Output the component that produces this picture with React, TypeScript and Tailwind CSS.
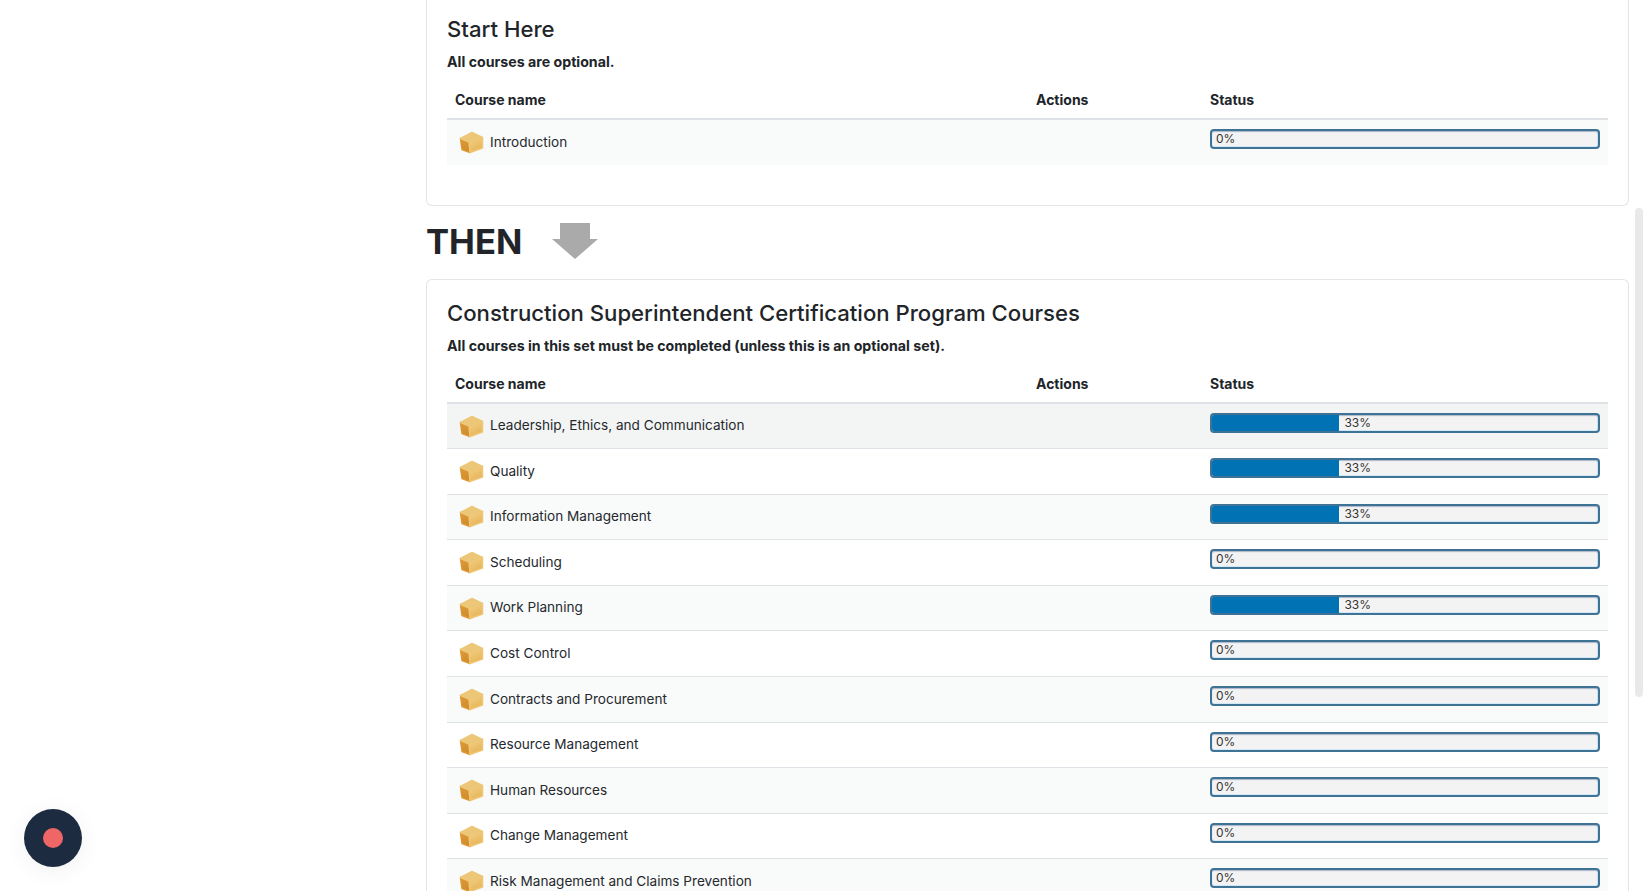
const courses = [
  { name: "Leadership, Ethics, and Communication", pct: 33 },
  { name: "Quality", pct: 33 },
  { name: "Information Management", pct: 33 },
  { name: "Scheduling", pct: 0 },
  { name: "Work Planning", pct: 33 },
  { name: "Cost Control", pct: 0 },
  { name: "Contracts and Procurement", pct: 0 },
  { name: "Resource Management", pct: 0 },
  { name: "Human Resources", pct: 0 },
  { name: "Change Management", pct: 0 },
  { name: "Risk Management and Claims Prevention", pct: 0 },
]

function BoxIcon() {
  return (
    <svg width="25" height="24" viewBox="0 0 25 24" className="shrink-0">
      <defs>
        <linearGradient id="boxFront" x1="0" y1="0" x2="0.5" y2="1">
          <stop offset="0" stopColor="#f5d388" />
          <stop offset="1" stopColor="#e6b358" />
        </linearGradient>
        <linearGradient id="boxSide" x1="0" y1="0" x2="0.4" y2="1">
          <stop offset="0" stopColor="#e09a38" />
          <stop offset="1" stopColor="#d08c2c" />
        </linearGradient>
      </defs>
      <path d="M1.5 8.5 L10 12 L11 22.5 L3 19.5 Z" fill="url(#boxSide)" stroke="#dc9632" strokeWidth="1.5" strokeLinejoin="round" />
      <path d="M10 12 L23.5 7.5 L23.5 18 L11 22.5 Z" fill="url(#boxFront)" stroke="#efc674" strokeWidth="1.5" strokeLinejoin="round" />
      <path d="M1.5 8.5 L13 2.5 L23.5 7.5 L10 12 Z" fill="#ecc778" stroke="#ecc778" strokeWidth="1.5" strokeLinejoin="round" />
    </svg>
  )
}

function Progress({ pct }: { pct: number }) {
  return (
    <div className="relative h-5 w-full overflow-hidden rounded-[4px] border-2 border-[#3f7396] bg-[#f3f3f4] shadow-[inset_0_1px_1px_rgba(40,70,120,0.35),inset_0_-1px_0_#d3e8f6,inset_-1px_0_0_#d3e8f6]">
      {pct > 0 && <div className="h-full bg-[#0173b5]" style={{ width: pct + "%" }} />}
      <span
        className="absolute top-0 text-xs leading-4 text-[#333]"
        style={{ left: pct > 0 ? `calc(${pct}% + 5px)` : "4px" }}
      >
        {pct}%
      </span>
    </div>
  )
}

function CourseTable({ rows }: { rows: { name: string; pct: number }[] }) {
  return (
    <table className="w-full table-fixed border-collapse text-[13.6px] text-[#25292d]">
      <thead>
        <tr className="h-[38px] border-b-2 border-[#dee2e6] text-left text-[14px] text-[#212529]">
          <th className="w-[589px] pl-2 font-bold">Course name</th>
          <th className="w-[174px] pl-0 font-bold">Actions</th>
          <th className="pl-0 font-bold">Status</th>
        </tr>
      </thead>
      <tbody>
        {rows.map((r, i) => {
          let bg = i % 2 === 0 ? "bg-[#f9fafa]" : "bg-white"
          if (rows.length > 1 && i === 0) bg = "bg-[#f3f4f4]"
          return (
            <tr key={r.name} className={`h-[45.6px] border-b border-[#dee2e6] last:border-b-0 ${bg}`}>
              <td className="pl-[12px]">
                <div className="flex items-center gap-[6px] pb-[1px]">
                  <BoxIcon />
                  <span>{r.name}</span>
                </div>
              </td>
              <td />
              <td className="pr-2 align-top pt-[9px]">
                <Progress pct={r.pct} />
              </td>
            </tr>
          )
        })}
      </tbody>
    </table>
  )
}

export default function App() {
  return (
    <div className="relative h-[891px] overflow-hidden bg-white font-['Inter',sans-serif] text-[#212529]">
      <main className="ml-[426px] mr-[15px]">
        <section className="h-[206px] rounded-b-md border-x border-b border-[#e3e5e8] px-5 pt-[14px]">
          <h2 className="text-[22.15px] font-medium leading-[30px]">Start Here</h2>
          <p className="mt-[8px] text-[14.2px] font-bold leading-5">All courses are optional.</p>
          <div className="mt-[9px]">
            <CourseTable rows={[{ name: "Introduction", pct: 0 }]} />
          </div>
        </section>

        <div className="flex h-[73px] items-center gap-[29px] pb-[3px]">
          <span className="text-[34.6px] font-bold leading-none">THEN</span>
          <svg width="48" height="38" viewBox="0 0 48 38">
            <path d="M9 1 H39 V17 H47 L24 37 L1 17 H9 Z" fill="#aaaaaa" />
          </svg>
        </div>

        <section className="rounded-t-md border-x border-t border-[#e3e5e8] px-5 pt-[18px]">
          <h2 className="text-[22.15px] font-medium leading-[30px]">
            Construction Superintendent Certification Program Courses
          </h2>
          <p className="mt-[8px] text-[14.2px] font-bold leading-5">
            All courses in this set must be completed (unless this is an optional set).
          </p>
          <div className="mt-[9px]">
            <CourseTable rows={courses} />
          </div>
        </section>
      </main>

      <div className="absolute right-[1px] top-[208px] h-[489px] w-[8px] rounded-full bg-[#e9e9e9]" />

      <div className="absolute left-6 top-[809px] flex h-[58px] w-[58px] items-center justify-center rounded-full bg-[#1d2b40] shadow-[0_4px_24px_rgba(0,0,0,0.06)]">
        <div className="h-5 w-5 rounded-full bg-[#ee6766]" />
      </div>
    </div>
  )
}
